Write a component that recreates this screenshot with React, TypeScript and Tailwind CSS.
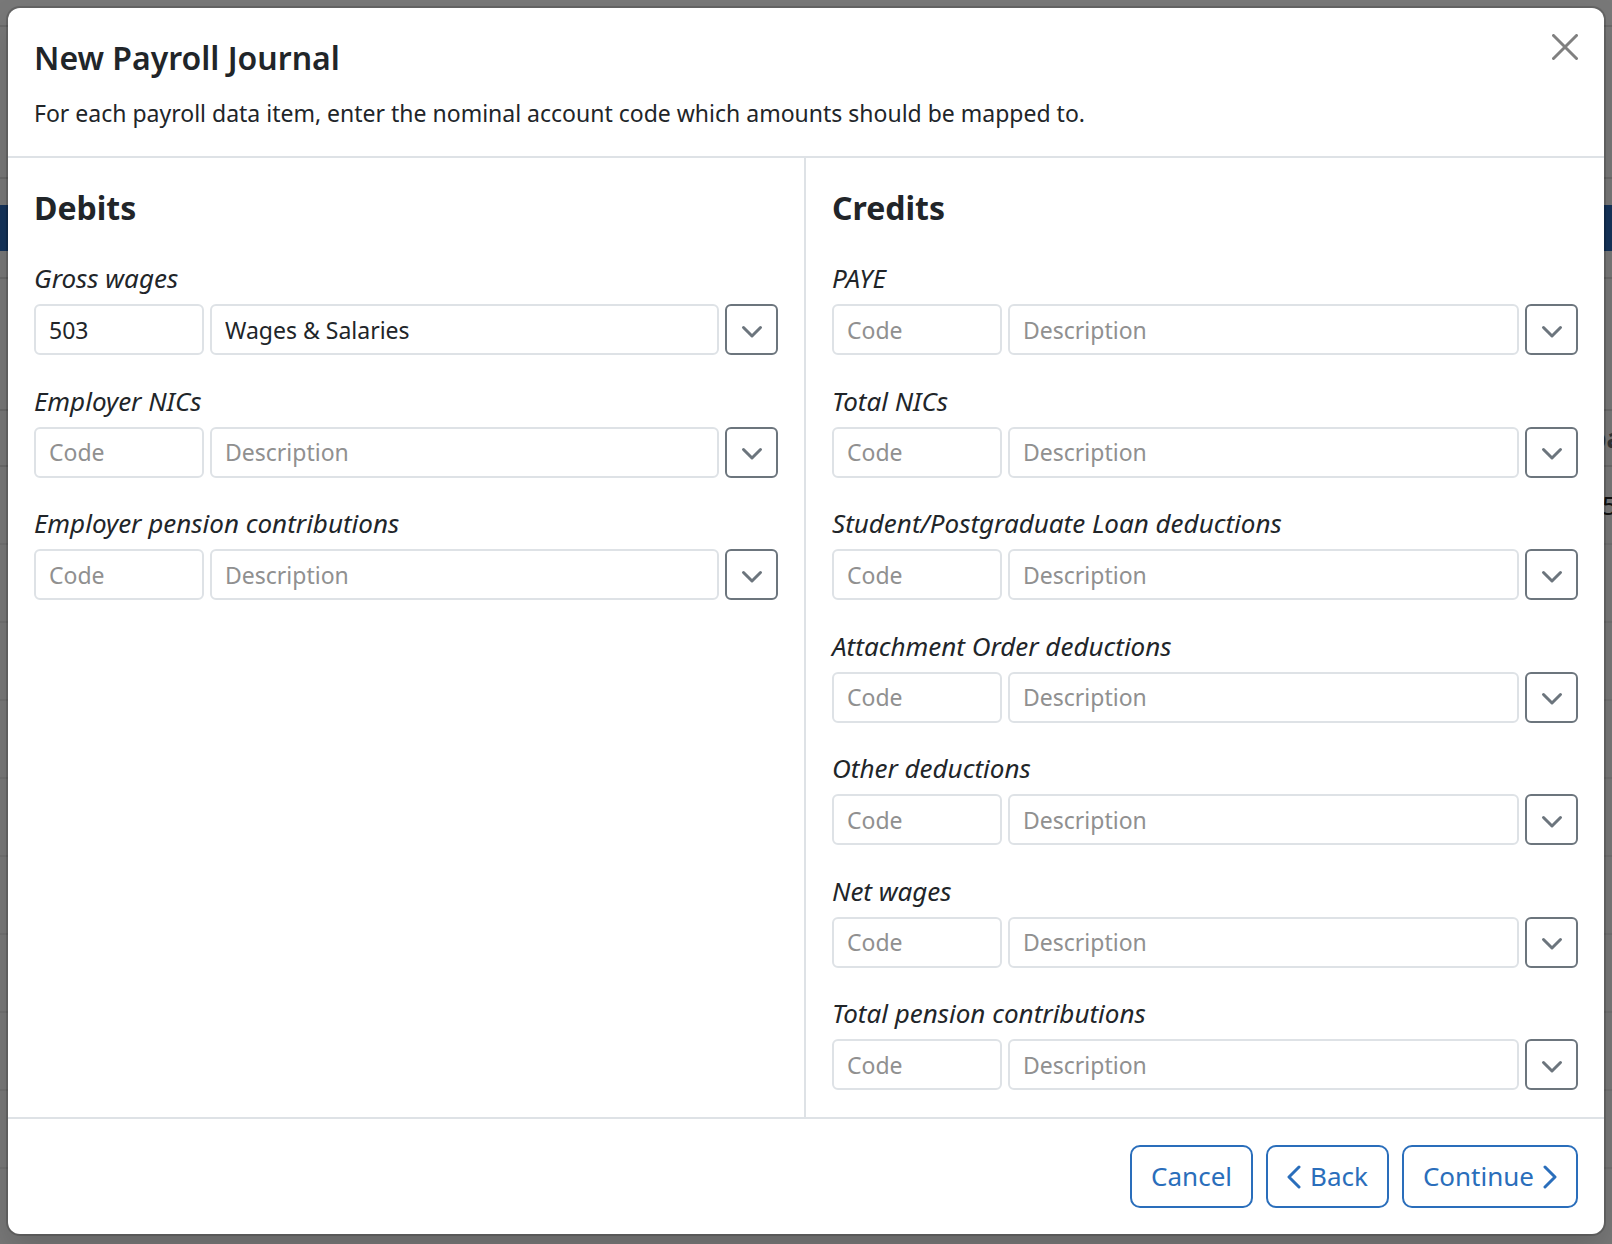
import { useState } from "react";

type Item = { label: string; code?: string; description?: string };

const debits: Item[] = [
  { label: "Gross wages", code: "503", description: "Wages & Salaries" },
  { label: "Employer NICs" },
  { label: "Employer pension contributions" },
];

const credits: Item[] = [
  { label: "PAYE" },
  { label: "Total NICs" },
  { label: "Student/Postgraduate Loan deductions" },
  { label: "Attachment Order deductions" },
  { label: "Other deductions" },
  { label: "Net wages" },
  { label: "Total pension contributions" },
];

const inputClass =
  "h-[51px] min-w-0 rounded-md border-2 border-[#dee2e6] bg-white px-[13px] text-[23px] text-[#212529] outline-none placeholder:text-[#909090] focus:border-[#2a6ebb]";

const footerButton =
  "flex h-[63px] items-center gap-[9px] rounded-[10px] border-2 border-[#2a6ebb] px-[19px] text-[26px] text-[#2a6ebb]";

function Icon({ viewBox, d, className }: { viewBox: string; d: string; className: string }) {
  return (
    <svg
      viewBox={viewBox}
      fill="none"
      stroke="currentColor"
      strokeWidth="3"
      strokeLinecap="round"
      strokeLinejoin="round"
      className={className}
      aria-hidden="true"
    >
      <path d={d} />
    </svg>
  );
}

function AccountRow({ item }: { item: Item }) {
  const [code, setCode] = useState(item.code ?? "");
  const [description, setDescription] = useState(item.description ?? "");
  const id = item.label.toLowerCase().replace(/[^a-z]+/g, "-");

  return (
    <div>
      <label htmlFor={id} className="mb-[10px] block text-[26px] leading-8 italic">
        {item.label}
      </label>
      <div className="flex gap-[6px]">
        <input
          id={id}
          placeholder="Code"
          value={code}
          onChange={(e) => setCode(e.target.value)}
          className={`${inputClass} w-[170px]`}
        />
        <input
          aria-label={`${item.label} description`}
          placeholder="Description"
          value={description}
          onChange={(e) => setDescription(e.target.value)}
          className={`${inputClass} flex-1`}
        />
        <button
          type="button"
          aria-label={`Choose account for ${item.label}`}
          className="flex h-[51px] w-[53px] items-center justify-center rounded-md border-2 border-[#6c757d] text-[#6c757d]"
        >
          <Icon viewBox="0 0 24 24" d="M3.5 9.5L12 18l8.5-8.5" className="size-6" />
        </button>
      </div>
    </div>
  );
}

function Column({ title, items }: { title: string; items: Item[] }) {
  return (
    <section className="flex flex-col px-[26px] pt-[30px] pb-[26px]">
      <h2 className="mb-[34px] text-[32px] leading-10 font-bold">{title}</h2>
      <div className="grid flex-1 grid-rows-7 gap-y-[29px]">
        {items.map((item) => (
          <AccountRow key={item.label} item={item} />
        ))}
      </div>
    </section>
  );
}

// Dimmed page that shows round the edges of the dialog
function Backdrop() {
  return (
    <div className="absolute inset-0 overflow-hidden text-[26px]" aria-hidden="true">
      <div className="h-[27px] border-b-2 border-[#6a6a6a]" />
      <div className="h-[152px] border-b-2 border-[#6a6a6a]" />
      <div className="h-[26px]" />
      <div className="h-[46px] bg-[#15335a]" />
      <div className="h-[28px] border-b-2 border-[#6a6a6a]" />
      <div className="h-[132px] border-b-2 border-[#6a6a6a]" />
      <div className="flex h-[56px] items-center border-b-2 border-[#6a6a6a] pl-[calc(100%-22px)] font-bold text-[#303335]">
        pa
      </div>
      <div className="flex h-[78px] items-center border-b-2 border-[#707070] pl-[calc(100%-10px)] text-[#111]">
        5
      </div>
      {Array.from({ length: 8 }, (_, i) => (
        <div key={i} className="h-[78px] border-b-2 border-[#707070]" />
      ))}
    </div>
  );
}

export default function App() {
  return (
    <div className="relative min-h-screen bg-[#787878] font-['Noto_Sans','Open_Sans',sans-serif] text-[#212529]">
      <Backdrop />

      <div className="relative flex min-h-screen px-2 pt-2 pb-[10px]">
        <div
          role="dialog"
          aria-labelledby="journal-title"
          className="flex flex-1 flex-col rounded-xl bg-white shadow-[0_0_0_2px_rgba(0,0,0,0.16),0_16px_32px_rgba(0,0,0,0.15)]"
        >
          <header className="flex items-start justify-between border-b-2 border-[#dee2e6] px-[26px] pt-[26px] pb-6">
            <div>
              <h1 id="journal-title" className="text-[32px] leading-12 font-semibold">
                New Payroll Journal
              </h1>
              <p className="mt-3 text-[23px] leading-[38px]">
                For each payroll data item, enter the nominal account code which
                amounts should be mapped to.
              </p>
            </div>
            <button type="button" aria-label="Close" className="text-[#808080]">
              <Icon
                viewBox="0 0 26 26"
                d="M1.5 1.5l23 23M24.5 1.5l-23 23"
                className="size-[26px]"
              />
            </button>
          </header>

          <div className="grid flex-1 grid-cols-2 divide-x-2 divide-[#dee2e6]">
            <Column title="Debits" items={debits} />
            <Column title="Credits" items={credits} />
          </div>

          <footer className="flex justify-end gap-[13px] border-t-2 border-[#dee2e6] p-[26px]">
            <button type="button" className={footerButton}>
              Cancel
            </button>
            <button type="button" className={footerButton}>
              <Icon viewBox="0 0 14 24" d="M12 2L2 12l10 10" className="h-6 w-[14px]" />
              Back
            </button>
            <button type="button" className={footerButton}>
              Continue
              <Icon viewBox="0 0 14 24" d="M2 2l10 10L2 22" className="h-6 w-[14px]" />
            </button>
          </footer>
        </div>
      </div>
    </div>
  );
}
